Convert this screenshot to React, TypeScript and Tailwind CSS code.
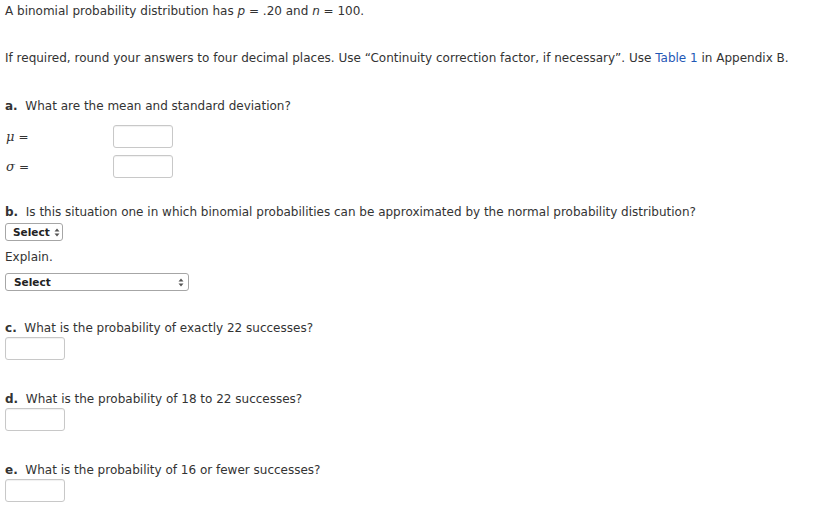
function Box({ className = "" }: { className?: string }) {
  return (
    <div
      className={`h-[23px] w-[60px] rounded-[3px] border border-[#c8c8c8] bg-white shadow-[inset_0_1px_1px_rgba(0,0,0,0.06)] ${className}`}
    />
  );
}

function Select({ width, compact }: { width: string; compact?: boolean }) {
  return (
    <div
      className={`flex h-[18px] ${width} items-center rounded-[3px] border border-[#a6a6a6] bg-white text-[10.5px] font-bold text-[#222] ${
        compact ? "gap-[4px] pl-[7px]" : "justify-between pl-[8px] pr-[4px]"
      }`}
    >
      <span>Select</span>
      <svg width="6" height="9" viewBox="0 0 6 9" className="text-[#555]">
        <path d="M3 0.5 L5.5 3.5 H0.5 Z" fill="currentColor" />
        <path d="M3 8.5 L5.5 5.5 H0.5 Z" fill="currentColor" />
      </svg>
    </div>
  );
}

function Label({ letter, children }: { letter: string; children: React.ReactNode }) {
  return (
    <p>
      <span className="font-bold">{letter}.</span>&nbsp; {children}
    </p>
  );
}

export default function App() {
  return (
    <div className="min-h-[517px] w-[836px] bg-white px-[5px] pt-[3px] font-['DejaVu_Sans',Verdana,sans-serif] text-[12px] leading-[16px] text-[#333]">
      <p>
        A binomial probability distribution has <i>p</i> = .20 and <i>n</i> = 100.
      </p>

      <p className="mt-[31px]">
        If required, round your answers to four decimal places. Use “Continuity correction factor, if necessary”. Use{" "}
        <span className="text-[#1f57b5]">Table 1</span> in Appendix B.
      </p>

      <div className="mt-[32px]">
        <Label letter="a">What are the mean and standard deviation?</Label>
        <div className="mt-[11px] flex flex-col gap-[7px]">
          <div className="flex items-center">
            <span className="w-[108px] pl-[1px] text-[13px] italic font-['DejaVu_Serif',serif]">
              μ <span className="text-[12px] not-italic font-['DejaVu_Sans',sans-serif]">=</span>
            </span>
            <Box />
          </div>
          <div className="flex items-center">
            <span className="w-[108px] pl-[1px] text-[13px] italic font-['DejaVu_Serif',serif]">
              σ <span className="text-[12px] not-italic font-['DejaVu_Sans',sans-serif]">=</span>
            </span>
            <Box />
          </div>
        </div>
      </div>

      <div className="mt-[26px]">
        <Label letter="b">
          Is this situation one in which binomial probabilities can be approximated by the normal probability
          distribution?
        </Label>
        <div className="mt-[3px]">
          <Select width="w-[58px]" compact />
        </div>
        <p className="mt-[8px]">Explain.</p>
        <div className="mt-[8px]">
          <Select width="w-[184px]" />
        </div>
      </div>

      <div className="mt-[29px]">
        <Label letter="c">What is the probability of exactly 22 successes?</Label>
        <Box className="mt-[1px]" />
      </div>

      <div className="mt-[31px]">
        <Label letter="d">What is the probability of 18 to 22 successes?</Label>
        <Box className="mt-[1px]" />
      </div>

      <div className="mt-[31px]">
        <Label letter="e">What is the probability of 16 or fewer successes?</Label>
        <Box className="mt-[1px]" />
      </div>
    </div>
  );
}
